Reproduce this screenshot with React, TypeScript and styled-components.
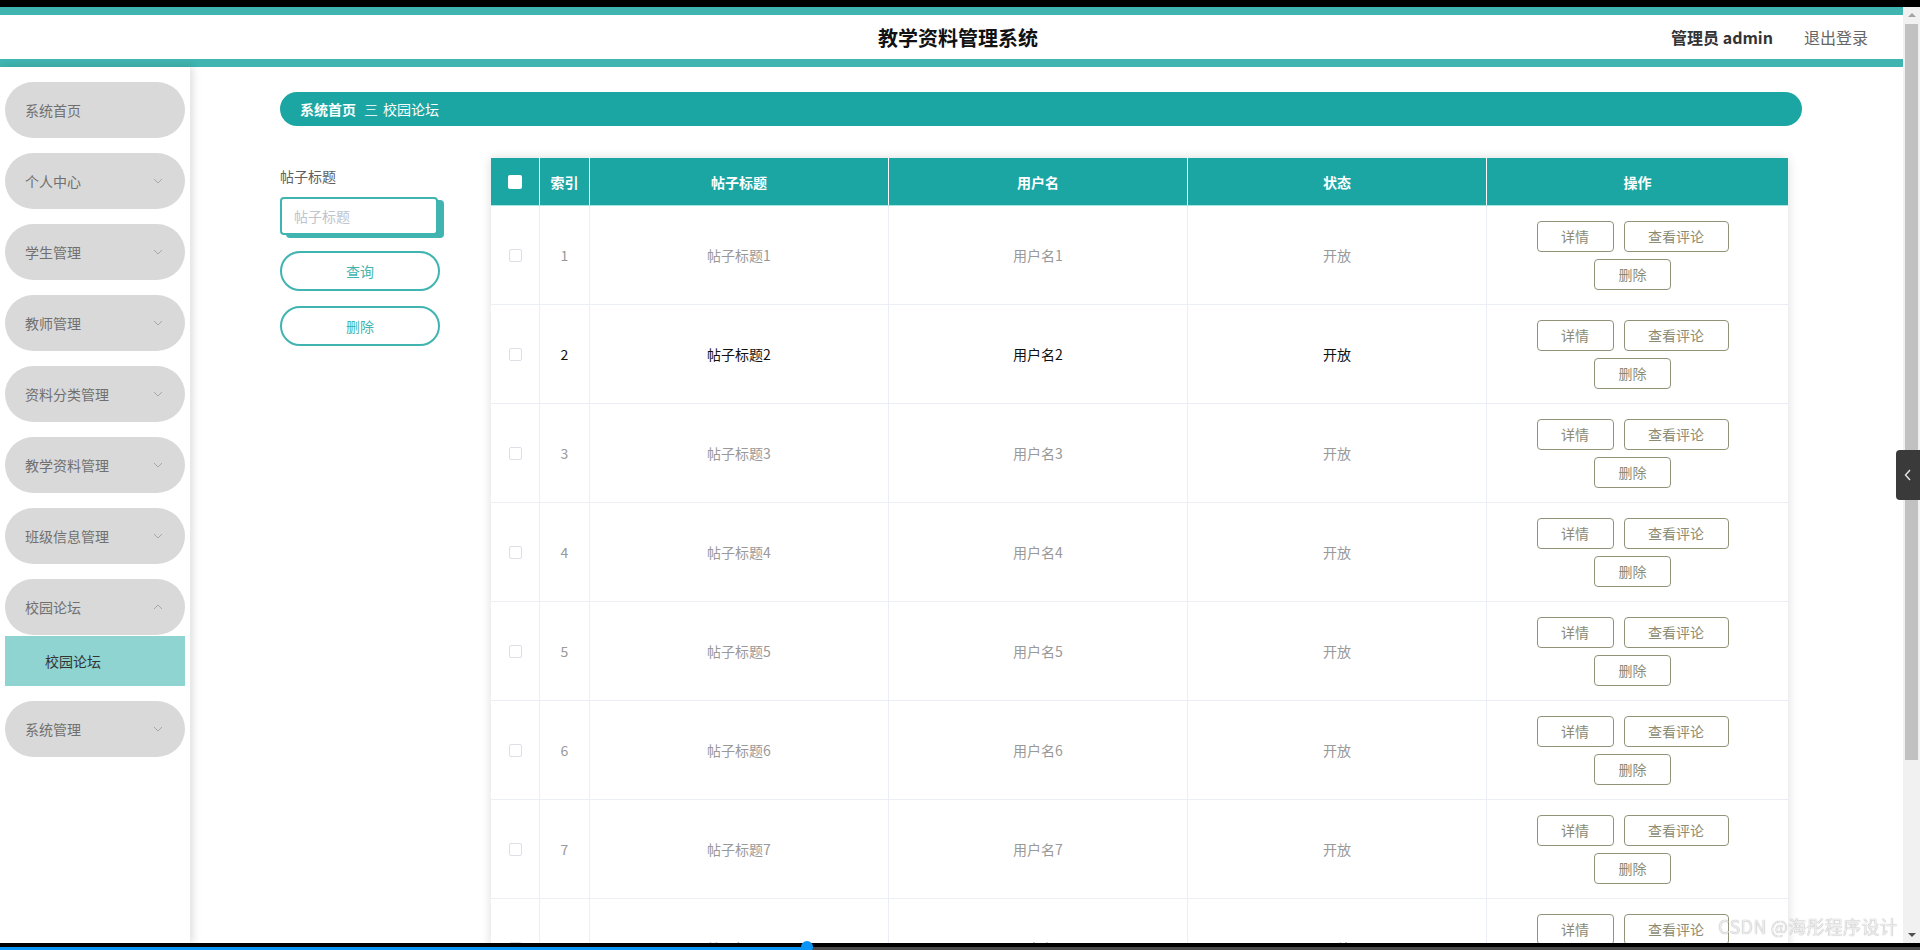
import React from "react";
import styled, { createGlobalStyle } from "styled-components";

const TEAL = "#1ba6a4";
const LIGHT_TEAL = "#3fb4b0";
const FONT = `"Noto Sans CJK SC", "Noto Sans", "Liberation Sans", sans-serif`;

const Global = createGlobalStyle`
  html, body { margin: 0; padding: 0; height: 100%; overflow: hidden; background: #fff; }
  body { font-family: ${FONT}; }
  #root { height: 100%; }
  * { box-sizing: border-box; }
`;

const Root = styled.div`
  height: 950px;
  display: flex;
  flex-direction: column;
  overflow: hidden;
`;

const TopBlack = styled.div`
  height: 7px;
  flex-shrink: 0;
  background: #000;
`;

const Body = styled.div`
  flex: 1;
  min-height: 0;
  display: flex;
`;

const Page = styled.div`
  flex: 1;
  min-width: 0;
  display: flex;
  flex-direction: column;
  overflow: hidden;
`;

const Header = styled.header`
  height: 60px;
  flex-shrink: 0;
  border-top: 8px solid ${LIGHT_TEAL};
  border-bottom: 8px solid ${LIGHT_TEAL};
  display: grid;
  grid-template-columns: 1fr auto 1fr;
  align-items: center;
  padding-left: 13px;
  background: #fff;
`;

const Title = styled.h1`
  grid-column: 2;
  margin: 0;
  font-size: 20px;
  font-weight: 700;
  color: #111;
`;

const UserArea = styled.div`
  justify-self: end;
  margin-right: 35px;
  display: flex;
  align-items: center;
  gap: 31px;
  font-size: 16px;
`;

const UserName = styled.span`
  font-weight: 700;
  color: #333;
`;

const Logout = styled.span`
  color: #666;
`;

const Main = styled.div`
  flex: 1;
  min-height: 0;
  display: flex;
`;

const Sidebar = styled.nav`
  width: 190px;
  flex-shrink: 0;
  padding: 15px 5px;
  display: flex;
  flex-direction: column;
  gap: 15px;
  background: #fff;
  box-shadow: 3px 0 8px rgba(0, 0, 0, 0.13);
  z-index: 1;
`;

const MenuGroup = styled.div`
  display: flex;
  flex-direction: column;
  gap: 1px;
`;

const MenuItem = styled.div`
  height: 56px;
  border-radius: 28px;
  background: #d9d9d9;
  padding: 0 22px 0 20px;
  display: flex;
  align-items: center;
  justify-content: space-between;
  font-size: 14px;
  color: #707070;
`;

const SubItem = styled.div`
  height: 50px;
  background: #8fd4d1;
  padding-left: 40px;
  display: flex;
  align-items: center;
  font-size: 14px;
  color: #333;
`;

const Content = styled.main`
  flex: 1;
  min-width: 0;
  padding: 25px 101px 0 90px;
`;

const Breadcrumb = styled.div`
  height: 34px;
  border-radius: 17px;
  background: ${TEAL};
  padding-left: 20px;
  display: flex;
  align-items: center;
  font-size: 14px;
  color: #fff;
`;

const CrumbStrong = styled.span`
  font-weight: 700;
`;

const CrumbSep = styled.span`
  margin: 0 5px 0 8px;
  font-weight: 300;
`;

const Lower = styled.div`
  display: flex;
  align-items: flex-start;
  gap: 46px;
  margin-top: 32px;
  margin-right: 14px;
`;

const SearchPanel = styled.div`
  width: 165px;
  flex-shrink: 0;
  padding-top: 8px;
  display: flex;
  flex-direction: column;
`;

const Label = styled.div`
  font-size: 14px;
  line-height: 20px;
  color: #606060;
  margin-bottom: 11px;
`;

const Input = styled.input`
  width: 158px;
  height: 38px;
  border: 2px solid ${LIGHT_TEAL};
  border-radius: 4px;
  box-shadow: 6px 3px 0 0 ${LIGHT_TEAL};
  padding: 0 12px;
  font-family: ${FONT};
  font-size: 14px;
  outline: none;
  &::placeholder { color: #c0c4cc; }
`;

const PillButton = styled.button<{ $top: number }>`
  width: 160px;
  height: 40px;
  margin-top: ${(p) => p.$top}px;
  border: 2px solid ${LIGHT_TEAL};
  border-radius: 20px;
  background: #fff;
  color: ${LIGHT_TEAL};
  font-family: ${FONT};
  font-size: 14px;
  padding: 0;
`;

const TableCard = styled.div`
  flex: 1;
  min-width: 0;
  background: #fff;
  box-shadow: 0 0 10px rgba(0, 0, 0, 0.14);
`;

const COLS = "49px 50px 299px 299px 299px 1fr";

const HeadRow = styled.div`
  display: grid;
  grid-template-columns: ${COLS};
  height: 48px;
  background: ${TEAL};
  border-bottom: 1px solid #a8e6e4;
`;

const HeadCell = styled.div`
  display: flex;
  align-items: center;
  justify-content: center;
  border-right: 1px solid #fff;
  color: #fff;
  font-weight: 700;
  font-size: 14px;
  &:last-child { border-right: none; }
`;

const HeadCheck = styled.span`
  width: 14px;
  height: 14px;
  border-radius: 2px;
  background: #fff;
`;

const BodyRow = styled.div<{ $active?: boolean }>`
  display: grid;
  grid-template-columns: ${COLS};
  height: 99px;
  border-bottom: 1px solid #ebeef5;
  color: ${(p) => (p.$active ? "#111" : "#999")};
  font-size: 14px;
`;

const Cell = styled.div`
  display: flex;
  align-items: center;
  justify-content: center;
  border-right: 1px solid #ebeef5;
  &:last-child { border-right: none; }
`;

const RowCheck = styled.span`
  width: 13px;
  height: 13px;
  border: 1px solid #dcdfe6;
  border-radius: 2px;
  background: #fff;
`;

const OpsCell = styled.div`
  display: flex;
  flex-wrap: wrap;
  justify-content: center;
  align-content: center;
  row-gap: 7px;
  padding: 0 40px;
`;

const OpButton = styled.button`
  height: 31px;
  margin-right: 10px;
  padding: 0 23.5px;
  border: 1px solid #929279;
  border-radius: 4px;
  background: #fff;
  color: #8c8c74;
  font-family: ${FONT};
  font-size: 14px;
`;

const ScrollTrack = styled.div`
  width: 17px;
  flex-shrink: 0;
  background: #f1f1f1;
  display: flex;
  flex-direction: column;
  align-items: center;
`;

const ArrowUp = styled.div`
  margin-top: 6px;
  width: 0;
  height: 0;
  border-left: 4px solid transparent;
  border-right: 4px solid transparent;
  border-bottom: 4px solid #a3a3a3;
`;

const Thumb = styled.div`
  margin-top: 7px;
  width: 13px;
  height: 736px;
  background: #c1c1c1;
`;

const ArrowDown = styled.div`
  margin-top: auto;
  margin-bottom: 6px;
  width: 0;
  height: 0;
  border-left: 4px solid transparent;
  border-right: 4px solid transparent;
  border-top: 4px solid #505050;
`;

const BottomBar = styled.div`
  height: 7px;
  flex-shrink: 0;
  background: #000;
  position: relative;
  display: flex;
  align-items: flex-end;
`;

const Progress = styled.div`
  height: 3px;
  width: 100%;
  background: linear-gradient(to right, #0a94f5 0, #0a94f5 807px, #4a4a4a 807px);
`;

const ProgressDot = styled.span`
  position: absolute;
  left: 801px;
  bottom: -3px;
  width: 12px;
  height: 12px;
  border-radius: 50%;
  background: #0a94f5;
`;

const SideTab = styled.div`
  position: fixed;
  right: 0;
  top: 450px;
  width: 24px;
  height: 50px;
  border-radius: 4px 0 0 4px;
  background: #3a3a3a;
  display: flex;
  align-items: center;
  justify-content: center;
`;

const Watermark = styled.div`
  position: fixed;
  right: 22px;
  bottom: 11px;
  font-family: ${FONT};
  font-size: 18px;
  letter-spacing: 0.3px;
  color: rgba(240, 240, 240, 0.95);
  text-shadow: 0 0 1px rgba(0, 0, 0, 0.45);
  pointer-events: none;
`;

const Chevron = ({ up }: { up?: boolean }) => (
  <svg width="10" height="6" viewBox="0 0 10 6" fill="none">
    <polyline
      points={up ? "1,5 5,1 9,5" : "1,1 5,5 9,1"}
      stroke="#a8a8a8"
      strokeWidth="1"
    />
  </svg>
);

const menus: { name: string; chevron: boolean }[] = [
  { name: "系统首页", chevron: false },
  { name: "个人中心", chevron: true },
  { name: "学生管理", chevron: true },
  { name: "教师管理", chevron: true },
  { name: "资料分类管理", chevron: true },
  { name: "教学资料管理", chevron: true },
  { name: "班级信息管理", chevron: true },
];

const rows = [1, 2, 3, 4, 5, 6, 7, 8, 9];

export default function App() {
  return (
    <>
      <Global />
      <Root>
        <TopBlack />
        <Body>
          <Page>
            <Header>
              <Title>教学资料管理系统</Title>
              <UserArea>
                <UserName>管理员 admin</UserName>
                <Logout>退出登录</Logout>
              </UserArea>
            </Header>
            <Main>
              <Sidebar>
                {menus.map((m) => (
                  <MenuItem key={m.name}>
                    <span>{m.name}</span>
                    {m.chevron && <Chevron />}
                  </MenuItem>
                ))}
                <MenuGroup>
                  <MenuItem>
                    <span>校园论坛</span>
                    <Chevron up />
                  </MenuItem>
                  <SubItem>校园论坛</SubItem>
                </MenuGroup>
                <MenuItem>
                  <span>系统管理</span>
                  <Chevron />
                </MenuItem>
              </Sidebar>
              <Content>
                <Breadcrumb>
                  <CrumbStrong>系统首页</CrumbStrong>
                  <CrumbSep>三</CrumbSep>
                  <span>校园论坛</span>
                </Breadcrumb>
                <Lower>
                  <SearchPanel>
                    <Label>帖子标题</Label>
                    <Input placeholder="帖子标题" />
                    <PillButton $top={16}>查询</PillButton>
                    <PillButton $top={15}>删除</PillButton>
                  </SearchPanel>
                  <TableCard>
                    <HeadRow>
                      <HeadCell>
                        <HeadCheck />
                      </HeadCell>
                      <HeadCell>索引</HeadCell>
                      <HeadCell>帖子标题</HeadCell>
                      <HeadCell>用户名</HeadCell>
                      <HeadCell>状态</HeadCell>
                      <HeadCell>操作</HeadCell>
                    </HeadRow>
                    {rows.map((i) => (
                      <BodyRow key={i} $active={i === 2}>
                        <Cell>
                          <RowCheck />
                        </Cell>
                        <Cell>{i}</Cell>
                        <Cell>帖子标题{i}</Cell>
                        <Cell>用户名{i}</Cell>
                        <Cell>开放</Cell>
                        <OpsCell>
                          <OpButton>详情</OpButton>
                          <OpButton>查看评论</OpButton>
                          <OpButton>删除</OpButton>
                        </OpsCell>
                      </BodyRow>
                    ))}
                  </TableCard>
                </Lower>
              </Content>
            </Main>
          </Page>
          <ScrollTrack>
            <ArrowUp />
            <Thumb />
            <ArrowDown />
          </ScrollTrack>
        </Body>
        <BottomBar>
          <Progress />
          <ProgressDot />
        </BottomBar>
      </Root>
      <SideTab>
        <svg width="8" height="12" viewBox="0 0 8 12" fill="none">
          <polyline points="6,1 1.5,6 6,11" stroke="#e8e8e8" strokeWidth="1.4" />
        </svg>
      </SideTab>
      <Watermark>CSDN @海彤程序设计</Watermark>
    </>
  );
}
